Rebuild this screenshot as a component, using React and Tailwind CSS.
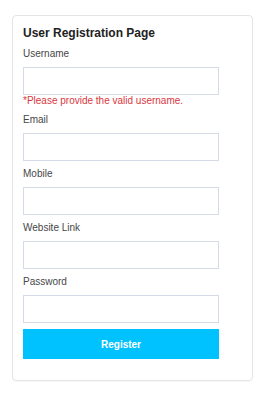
const Field = ({ label, type = "text", error }) => {
  return (
    <div className="mt-[7px] flex flex-col">
      <label className="text-[10px] leading-[12px] text-[#474747]">{label}</label>
      <input
        type={type}
        className="mt-[7px] h-[28px] w-[196px] border border-[#d5dbe6] bg-white outline-none"
      />
      {error && (
        <span className="text-[10px] leading-[12px] text-[#d9363e]">{error}</span>
      )}
    </div>
  );
};

export default function App() {
  return (
    <div className="min-h-[400px] bg-white pl-[12px] pt-[15px] font-['Liberation_Sans',Arial,sans-serif]">
      <div className="w-[241px] rounded-[4px] border border-[#e4e4e4] pl-[10px] pt-[9px] pb-[21px] shadow-[0_1px_1px_rgba(0,0,0,0.03)]">
        <h1 className="text-[12px] font-bold leading-[16px] text-[#222]">User Registration Page</h1>
        <div className="mt-[2px]">
          <Field label="Username" error="*Please provide the valid username." />
          <Field label="Email" type="email" />
          <Field label="Mobile" />
          <Field label="Website Link" />
          <Field label="Password" type="password" />
        </div>
        <button className="mt-[6px] h-[30px] w-[196px] bg-[#00c2ff] text-[10px] font-bold text-white">
          Register
        </button>
      </div>
    </div>
  );
}
